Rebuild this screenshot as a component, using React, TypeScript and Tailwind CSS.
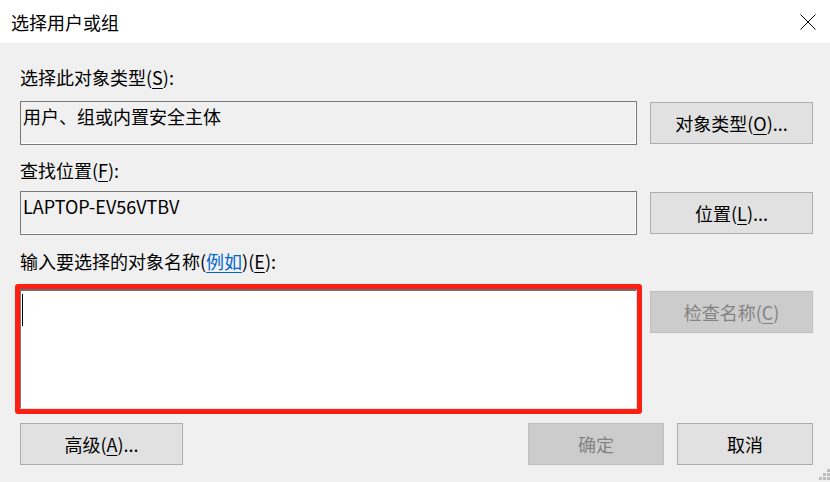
import React from 'react';

const font = { fontFamily: '"Noto Sans CJK SC", "Microsoft YaHei UI", sans-serif' };

function Key({ children }: { children: React.ReactNode }) {
  return <span className="underline underline-offset-[3px] decoration-1">{children}</span>;
}

function Button({ children, disabled, width = 'w-[163px]' }: { children: React.ReactNode; disabled?: boolean; width?: string }) {
  return (
    <div
      className={`${width} h-[42px] shrink-0 flex items-center justify-center border text-[18px] leading-[24px] ${
        disabled ? 'bg-[#cccccc] border-[#bfbfbf] text-[#838383]' : 'bg-[#e1e1e1] border-[#adadad] text-black'
      }`}
    >
      {children}
    </div>
  );
}

function ReadOnlyBox({ value }: { value: string }) {
  return (
    <div className="w-[617px] h-[44px] shrink-0 border border-[#7a7a7a] bg-[#f0f0f0] shadow-[inset_-1px_-1px_0_#ffffff] pl-[2px] pt-[2px] text-[18px] leading-[24px] text-black">
      {value}
    </div>
  );
}

export default function App() {
  return (
    <div className="relative w-[830px] h-[482px] overflow-hidden flex flex-col bg-[#f0f0f0] select-none" style={font}>
      {/* Title bar */}
      <div className="h-[43px] shrink-0 bg-white flex items-center justify-between pl-[11px] pr-[14px]">
        <span className="text-[18px] leading-[24px] text-black">选择用户或组</span>
        <svg width="16" height="16" viewBox="0 0 16 16" className="text-black">
          <path d="M0.5 0.5 L15.5 15.5 M15.5 0.5 L0.5 15.5" stroke="currentColor" strokeWidth="1" fill="none" />
        </svg>
      </div>

      {/* Body */}
      <div className="flex flex-col pl-[20px] pr-[17px]">
        <div className="mt-[22px] h-[24px] text-[18px] leading-[24px] text-black">
          选择此对象类型(<Key>S</Key>):
        </div>
        <div className="mt-[12px] flex items-center gap-[13px]">
          <ReadOnlyBox value="用户、组或内置安全主体" />
          <Button>
            对象类型(<Key>O</Key>)...
          </Button>
        </div>

        <div className="mt-[13px] h-[24px] text-[18px] leading-[24px] text-black">
          查找位置(<Key>F</Key>):
        </div>
        <div className="mt-[9px] flex items-center gap-[13px]">
          <ReadOnlyBox value="LAPTOP-EV56VTBV" />
          <Button>
            位置(<Key>L</Key>)...
          </Button>
        </div>

        <div className="mt-[14px] h-[24px] text-[18px] leading-[24px] text-black">
          输入要选择的对象名称(<span className="text-[#0066cc] underline underline-offset-[3px] decoration-1">例如</span>)(<Key>E</Key>):
        </div>
        <div className="mt-[11px] flex items-start">
          {/* red highlight round the name box */}
          <div className="-ml-[5px] w-[627px] h-[130px] shrink-0 border-[5px] border-[#fe1e12] rounded-[3px]">
            <div className="w-full h-full bg-white border-t-2 border-l border-t-[#6e6e6e] border-l-[#7a7a7a] border-r border-b border-r-[#e3e3e3] border-b-[#e3e3e3] shadow-[inset_-1px_-1px_0_#ffffff] pl-[1px] pt-[3px]">
              <div className="w-px h-[32px] bg-black" />
            </div>
          </div>
          <div className="mt-[7px] ml-[8px]">
            <Button disabled>
              检查名称(<Key>C</Key>)
            </Button>
          </div>
        </div>

        <div className="mt-[9px] flex items-center">
          <Button>
            高级(<Key>A</Key>)...
          </Button>
          <div className="flex-1" />
          <div className="flex gap-[13px]">
            <Button disabled width="w-[136px]">
              确定
            </Button>
            <Button width="w-[136px]">取消</Button>
          </div>
        </div>
      </div>

      {/* resize grip */}
      <svg width="11" height="11" viewBox="0 0 11 11" className="absolute right-0 bottom-[2px]">
        <g fill="#bcbcbc">
          <rect x="8" y="0" width="3" height="3" />
          <rect x="4" y="4" width="3" height="3" />
          <rect x="8" y="4" width="3" height="3" />
          <rect x="0" y="8" width="3" height="3" />
          <rect x="4" y="8" width="3" height="3" />
          <rect x="8" y="8" width="3" height="3" />
        </g>
      </svg>
    </div>
  );
}
